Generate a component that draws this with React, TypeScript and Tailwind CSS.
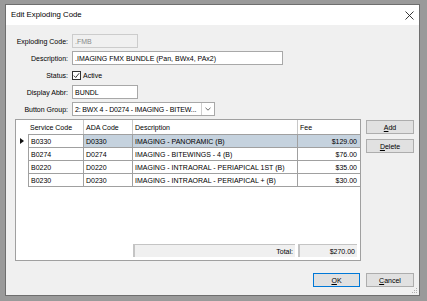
import React from "react";

const rows = [
  { svc: "B0330", ada: "D0330", desc: "IMAGING - PANORAMIC (B)", fee: "$129.00", sel: true },
  { svc: "B0274", ada: "D0274", desc: "IMAGING - BITEWINGS - 4 (B)", fee: "$76.00" },
  { svc: "B0220", ada: "D0220", desc: "IMAGING - INTRAORAL - PERIAPICAL 1ST (B)", fee: "$35.00" },
  { svc: "B0230", ada: "D0230", desc: "IMAGING - INTRAORAL - PERIAPICAL + (B)", fee: "$30.00" },
];

function Label({ children }: { children: React.ReactNode }) {
  return <div className="w-[62px] shrink-0 text-right leading-none">{children}</div>;
}

function WinButton({
  children,
  focused,
  className = "",
}: {
  children: React.ReactNode;
  focused?: boolean;
  className?: string;
}) {
  return (
    <div
      className={`flex h-[14px] items-center justify-center border bg-[#e1e1e1] leading-none ${
        focused ? "border-[#0078d7]" : "border-[#adadad]"
      } ${className}`}
    >
      {children}
    </div>
  );
}

export default function App() {
  return (
    <div
      className="h-[301px] w-[427px] bg-[#9a9a9a] pl-[5px] pt-[4px] text-[7px] text-black"
      style={{ fontFamily: '"Liberation Sans", Arial, sans-serif' }}
    >
      <div className="flex h-[292px] w-[415px] flex-col border border-[#6e6e6e]">
        {/* title bar */}
        <div className="flex h-[20px] shrink-0 items-center justify-between bg-white pl-[5px] pr-[4px]">
          <span className="text-[7.8px] leading-none">Edit Exploding Code</span>
          <svg width="9" height="9" viewBox="0 0 9 9" className="mr-[1px]">
            <path d="M0.5 0.5 L8.5 8.5 M8.5 0.5 L0.5 8.5" stroke="#222" strokeWidth="0.9" />
          </svg>
        </div>

        {/* body */}
        <div className="relative flex flex-1 flex-col bg-[#f0f0f0] pt-[9px]">
          <div className="flex flex-col gap-[3px]">
            <div className="flex h-[14px] items-center gap-[4px]">
              <Label>Exploding Code:</Label>
              <div className="flex h-[14px] w-[66px] items-center border border-[#cccccc] bg-[#f0f0f0] px-[2px] leading-none text-[#8a8a8a]">
                .FMB
              </div>
            </div>
            <div className="flex h-[14px] items-center gap-[4px]">
              <Label>Description:</Label>
              <div className="flex h-[14px] w-[211px] items-center border border-[#a8a8a8] bg-white px-[2px] leading-none">
                .IMAGING FMX BUNDLE (Pan, BWx4, PAx2)
              </div>
            </div>
            <div className="flex h-[14px] items-center gap-[4px]">
              <Label>Status:</Label>
              <div className="flex items-center gap-[2px] leading-none">
                <div className="flex h-[9px] w-[9px] items-center justify-center border border-[#333] bg-white">
                  <svg width="7" height="7" viewBox="0 0 7 7">
                    <path d="M0.8 3.6 L2.7 5.5 L6.2 1.2" fill="none" stroke="#222" strokeWidth="0.9" />
                  </svg>
                </div>
                <span>Active</span>
              </div>
            </div>
            <div className="flex h-[14px] items-center gap-[4px]">
              <Label>Display Abbr:</Label>
              <div className="flex h-[14px] w-[66px] items-center border border-[#a8a8a8] bg-white px-[2px] leading-none">
                BUNDL
              </div>
            </div>
            <div className="flex h-[14px] items-center gap-[4px]">
              <Label>Button Group:</Label>
              <div className="flex h-[14px] w-[143px] items-center border border-[#a8a8a8] bg-white leading-none">
                <span className="flex-1 overflow-hidden whitespace-nowrap pl-[2px] tracking-[-0.15px]">
                  2: BWX 4 - D0274 - IMAGING - BITEW...
                </span>
                <div className="flex h-full w-[13px] shrink-0 items-center justify-center border-l border-[#cfcfcf]">
                  <svg width="6" height="4" viewBox="0 0 6 4">
                    <path d="M0.5 0.8 L3 3.2 L5.5 0.8" fill="none" stroke="#444" strokeWidth="0.8" />
                  </svg>
                </div>
              </div>
            </div>
          </div>

          {/* grid + side buttons */}
          <div className="mt-[3px] flex gap-[5px] pl-[9px]">
            <div className="flex h-[142px] w-[346px] flex-col border border-[#a0a0a0] bg-white">
              <div className="grid h-[14px] grid-cols-[12px_56px_49px_165px_1fr] leading-none">
                <div />
                <div className="flex items-center border-r border-[#c8c8c8] pl-[2px]">Service Code</div>
                <div className="flex items-center border-r border-[#c8c8c8] pl-[2px]">ADA Code</div>
                <div className="flex items-center border-r border-[#c8c8c8] pl-[2px]">Description</div>
                <div className="flex items-center pl-[2px]">Fee</div>
              </div>
              {rows.map((r) => (
                <div key={r.svc} className="grid h-[13px] grid-cols-[12px_56px_49px_165px_1fr] leading-none">
                  <div className="flex items-center pl-[4px]">
                    {r.sel && (
                      <svg width="4" height="6" viewBox="0 0 4 6">
                        <path d="M0 0 L4 3 L0 6 Z" fill="#111" />
                      </svg>
                    )}
                  </div>
                  <div className="flex items-center border-l border-r border-t border-[#a0a0a0] pl-[2px]">{r.svc}</div>
                  <div
                    className={`flex items-center border-r border-t border-[#a0a0a0] pl-[2px] ${
                      r.sel ? "bg-[#c5d2de]" : ""
                    }`}
                  >
                    {r.ada}
                  </div>
                  <div
                    className={`flex items-center whitespace-nowrap border-r border-t border-[#a0a0a0] pl-[2px] ${
                      r.sel ? "bg-[#c5d2de]" : ""
                    }`}
                  >
                    {r.desc}
                  </div>
                  <div
                    className={`flex items-center justify-end border-t border-[#a0a0a0] pr-[3px] ${
                      r.sel ? "bg-[#c5d2de]" : ""
                    }`}
                  >
                    {r.fee}
                  </div>
                </div>
              ))}
              <div className="ml-[12px] h-0 border-t border-[#a0a0a0]" />
              <div className="flex-1" />
              <div className="mb-[3px] flex gap-[3px] pl-[117px] pr-[3px] leading-none">
                <div className="flex h-[13px] w-[162px] items-center justify-end border-l-2 border-t border-[#c4c4c4] bg-[#f0f0f0] pr-[2px]">
                  Total:
                </div>
                <div className="flex h-[13px] flex-1 items-center justify-end border-l-2 border-t border-[#c4c4c4] bg-[#f0f0f0] pr-[2px]">
                  $270.00
                </div>
              </div>
            </div>
            <div className="flex flex-col gap-[5px] pt-[1px]">
              <WinButton className="w-[48px]">
                <span className="underline">A</span>dd
              </WinButton>
              <WinButton className="w-[48px]">
                <span className="underline">D</span>elete
              </WinButton>
            </div>
          </div>

          {/* bottom buttons */}
          <div className="mt-[12px] flex justify-end gap-[6px] pr-[5px]">
            <WinButton focused className="w-[47px]">
              <span className="underline">O</span>K
            </WinButton>
            <WinButton className="w-[48px]">
              <span className="underline">C</span>ancel
            </WinButton>
          </div>

          {/* resize grip */}
          <svg width="6" height="6" viewBox="0 0 6 6" className="absolute bottom-[1px] right-[1px]">
            <rect x="4" y="0" width="1" height="1" fill="#b0b0b0" />
            <rect x="2" y="2" width="1" height="1" fill="#b0b0b0" />
            <rect x="4" y="2" width="1" height="1" fill="#b0b0b0" />
            <rect x="0" y="4" width="1" height="1" fill="#b0b0b0" />
            <rect x="2" y="4" width="1" height="1" fill="#b0b0b0" />
            <rect x="4" y="4" width="1" height="1" fill="#b0b0b0" />
          </svg>
        </div>
      </div>
    </div>
  );
}
